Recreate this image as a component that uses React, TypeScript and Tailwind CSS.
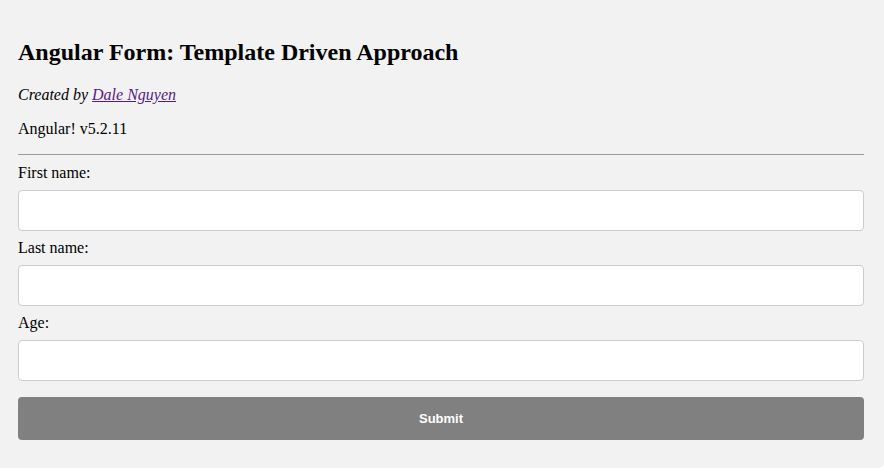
import React from "react";

export default function App() {
  const serif = { fontFamily: '"Liberation Serif", "Times New Roman", serif' };
  return (
    <div className="w-[884px] h-[473px] bg-white">
      <div
        className="bg-[#f2f2f2] rounded-br-[5px] h-[468px] pl-[18px] pr-[20px] pt-[38px] text-black"
        style={serif}
      >
        <h2 className="text-[24px] leading-[28px] font-bold m-0">
          Angular Form: Template Driven Approach
        </h2>
        <p className="italic text-[16px] leading-[18px] mt-[20px]">
          Created by{" "}
          <a href="#" className="underline text-[#551a8b]">
            Dale Nguyen
          </a>
        </p>
        <p className="text-[16px] leading-[18px] mt-[16px]">Angular! v5.2.11</p>
        <hr className="mt-[16px] mb-[9px] border-0 border-t border-[#9a9a9a]" />
        <form className="flex flex-col" onSubmit={(e) => e.preventDefault()}>
          <label className="text-[16px] leading-[18px]">First name:</label>
          <input
            className="mt-[8px] mb-[8px] h-[41px] w-full bg-white border border-[#ccc] rounded-[4px] px-[20px] outline-none"
            type="text"
          />
          <label className="text-[16px] leading-[18px]">Last name:</label>
          <input
            className="mt-[8px] mb-[8px] h-[41px] w-full bg-white border border-[#ccc] rounded-[4px] px-[20px] outline-none"
            type="text"
          />
          <label className="text-[16px] leading-[18px]">Age:</label>
          <input
            className="mt-[8px] mb-[8px] h-[41px] w-full bg-white border border-[#ccc] rounded-[4px] px-[20px] outline-none"
            type="text"
          />
          <button
            type="submit"
            className="mt-[8px] h-[43px] w-full bg-[#808080] text-white rounded-[4px] text-[13px] font-bold"
            style={{ fontFamily: '"Liberation Sans", Arial, sans-serif' }}
          >
            Submit
          </button>
        </form>
      </div>
    </div>
  );
}
